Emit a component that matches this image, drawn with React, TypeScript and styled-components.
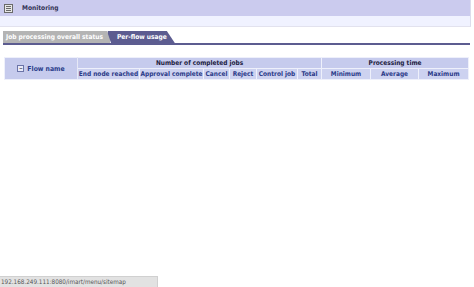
import { createGlobalStyle } from "styled-components";
import styled from "styled-components";

const GlobalStyle = createGlobalStyle`
  html, body {
    margin: 0;
    padding: 0;
    background: #ffffff;
  }
  body {
    font-family: "DejaVu Sans Condensed", "DejaVu Sans", Verdana, sans-serif;
  }
`;

const completed = ["End node reached", "Approval complete", "Cancel", "Reject", "Control job", "Total"];
const completedWidths = [62, 64, 26, 27, 41, 24];
const times = ["Minimum", "Average", "Maximum"];
const timeWidths = [49, 48, 50];

export default function App() {
  return (
    <Page>
      <GlobalStyle />
      <Portlet>
        <TitleBar>
          <PortletIcon width="9" height="9" viewBox="0 0 9 9">
            <rect x="0.5" y="0.5" width="8" height="8" fill="#e8e8e8" stroke="#6a6a6a" />
            <rect x="2" y="2" width="5" height="1" fill="#6a6a6a" />
            <rect x="2" y="4" width="5" height="1" fill="#6a6a6a" />
            <rect x="2" y="6" width="5" height="1" fill="#6a6a6a" />
          </PortletIcon>
          <Title>Monitoring</Title>
        </TitleBar>
        <PortletBody />
      </Portlet>

      <Tabs>
        <Tab $active={false}>Job processing overall status</Tab>
        <Tab $active>Per-flow usage</Tab>
      </Tabs>
      <TabRule />

      <Grid>
        <colgroup>
          <col style={{ width: 73 }} />
          {completedWidths.map((w, i) => (
            <col key={"c" + i} style={{ width: w }} />
          ))}
          {timeWidths.map((w, i) => (
            <col key={"t" + i} style={{ width: w }} />
          ))}
        </colgroup>
        <thead>
          <tr>
            <FlowHead rowSpan={2}>
              <FlowInner>
                <Toggle>−</Toggle>
                Flow name
              </FlowInner>
            </FlowHead>
            <GroupHead colSpan={6}>Number of completed jobs</GroupHead>
            <GroupHead colSpan={3}>Processing time</GroupHead>
          </tr>
          <tr>
            {completed.map((c) => (
              <SubHead key={c}>{c}</SubHead>
            ))}
            {times.map((c) => (
              <SubHead key={c}>{c}</SubHead>
            ))}
          </tr>
        </thead>
      </Grid>

      <StatusBar>192.168.249.111:8080/imart/menu/sitemap</StatusBar>
    </Page>
  );
}

const Page = styled.div`
  width: 474px;
  height: 287px;
  position: relative;
  overflow: hidden;
  background: #ffffff;
`;

const Portlet = styled.section`
  width: 470px;
  border-right: 1px solid #dcdcec;
  border-bottom: 1px solid #e2e2ee;
`;

const TitleBar = styled.header`
  height: 16px;
  background: #cbcbee;
  display: flex;
  align-items: center;
  padding-left: 4px;
  gap: 9px;
`;

const PortletIcon = styled.svg`
  display: block;
`;

const Title = styled.h1`
  margin: 0;
  font-size: 6.6px;
  font-weight: bold;
  color: #333355;
`;

const PortletBody = styled.div`
  height: 10px;
  background: #f0f2ff;
`;

const Tabs = styled.nav`
  display: flex;
  margin: 4px 0 0 3px;
  height: 12px;
`;

const Tab = styled.div<{ $active: boolean }>`
  display: flex;
  align-items: center;
  height: 12px;
  font-size: 6.6px;
  font-weight: bold;
  color: #ffffff;
  background: ${({ $active }) => ($active ? "#5c5c90" : "#b4b4b4")};
  padding: ${({ $active }) => ($active ? "0 8px 0 9px" : "0 7px 0 3px")};
  margin-left: ${({ $active }) => ($active ? "-3px" : "0")};
  clip-path: ${({ $active }) =>
    $active
      ? "polygon(0 0, calc(100% - 8px) 0, 100% 100%, 4px 100%)"
      : "polygon(0 0, 100% 0, 100% 100%, 0 100%)"};
  border-left: ${({ $active }) => ($active ? "1px solid #e6e6e6" : "none")};
  white-space: nowrap;
`;

const TabRule = styled.div`
  width: 467px;
  margin-left: 3px;
  height: 2px;
  background: #5c5c90;
`;

const Grid = styled.table`
  margin: 12px 0 0 4px;
  width: 464px;
  border-collapse: collapse;
  table-layout: fixed;
  background: #c6cbed;
  border: 1px solid #b8bde0;
`;

const HeadCell = styled.th`
  font-size: 6.5px;
  font-weight: bold;
  color: #2a3a88;
  text-align: center;
  white-space: nowrap;
  overflow: hidden;
  border: 1px solid #eef0fb;
  padding: 0;
`;

const FlowHead = styled(HeadCell)`
  height: 21px;
  font-size: 6.8px;
  color: #2a3d8a;
  border-right: 1px solid #e6e8f6;
`;

const FlowInner = styled.span`
  display: inline-flex;
  align-items: center;
  gap: 3px;
`;

const Toggle = styled.span`
  display: inline-flex;
  align-items: center;
  justify-content: center;
  width: 5px;
  height: 5px;
  border: 1px solid #6b74a8;
  background: #e8eafa;
  font-size: 5px;
  line-height: 1;
  color: #333;
`;

const GroupHead = styled(HeadCell)`
  height: 10px;
  color: #202040;
`;

const SubHead = styled(HeadCell)`
  height: 10px;
  background: #cdd2f0;
`;

const StatusBar = styled.div`
  position: absolute;
  left: 0;
  bottom: 0;
  width: 156px;
  height: 10px;
  padding-left: 1px;
  background: #e2e2e2;
  border-top: 1px solid #d0d0d0;
  border-right: 1px solid #d0d0d0;
  font-size: 6.3px;
  line-height: 10px;
  color: #555555;
  white-space: nowrap;
  overflow: hidden;
`;
